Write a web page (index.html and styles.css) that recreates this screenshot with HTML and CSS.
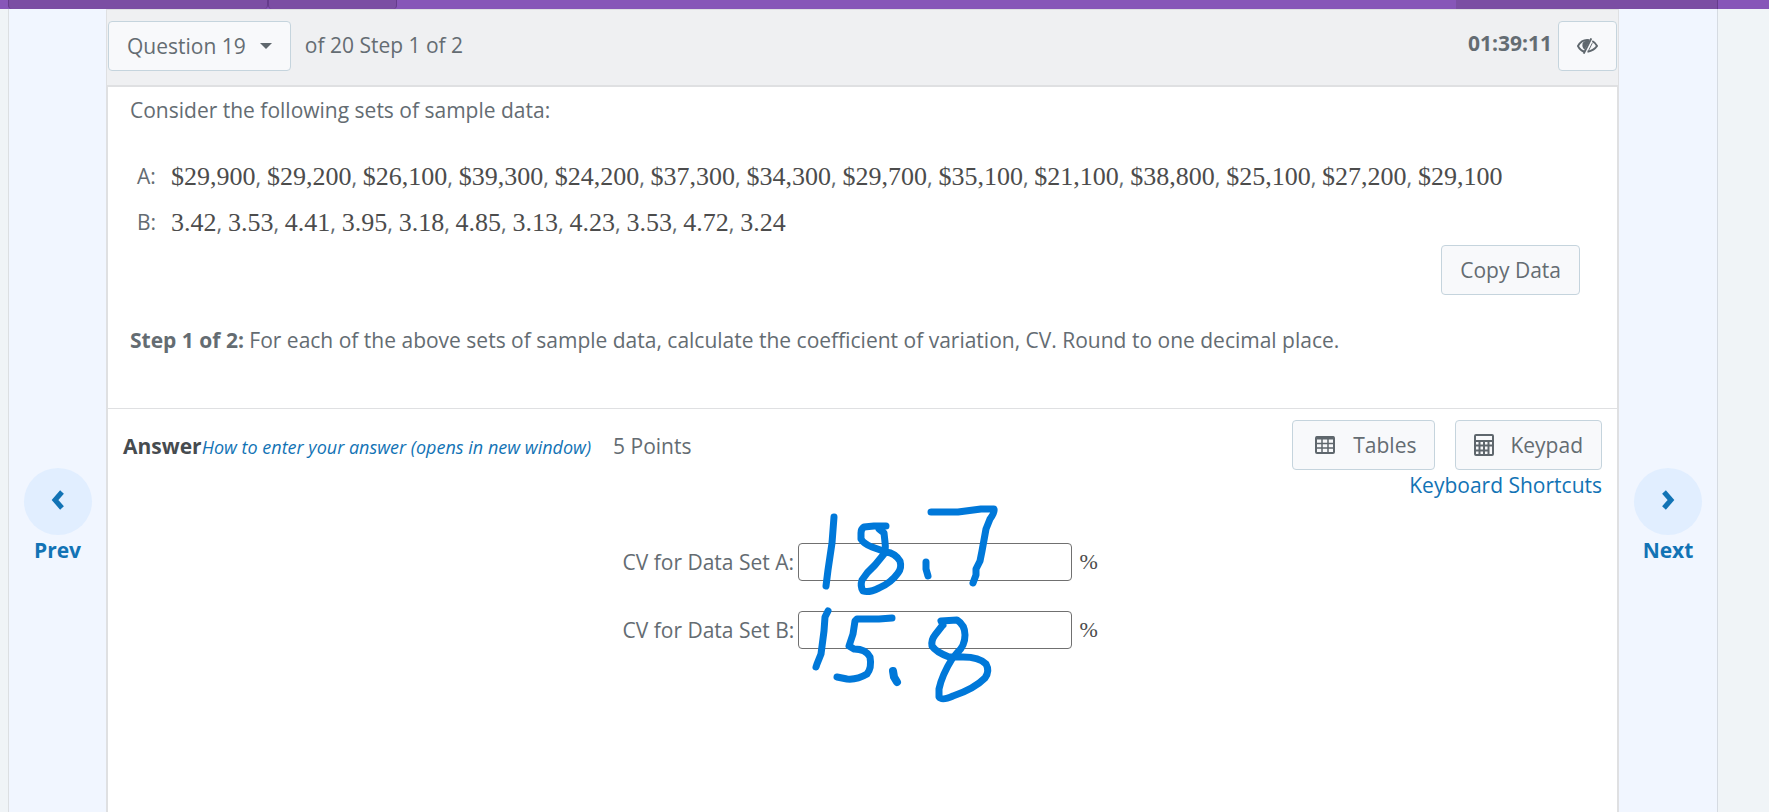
FILE: index.html
```html
<!DOCTYPE html>
<html lang="en">
<head>
    <meta charset="UTF-8">
    <meta name="viewport" content="width=device-width, initial-scale=1.0">
    <title>Question 19 of 20</title>
    <link rel="stylesheet" href="styles.css">
</head>
<body>
    <div class="top-bar">
        <div class="tab tab-wide"></div>
        <div class="tab tab-narrow"></div>
        <div class="tab-right"></div>
    </div>

    <div class="page">
        <nav class="side">
            <a class="side-link" href="#prev">
                <span class="circle">
                    <svg width="14" height="20" viewBox="0 0 14 20"><path d="M11 2 L4 10 L11 18" fill="none" stroke="#1273b5" stroke-width="5"/></svg>
                </span>
                Prev
            </a>
        </nav>

        <main class="main">
            <header class="question-bar">
                <button class="btn question-btn">Question 19 <span class="caret"></span></button>
                <span class="step-count">of 20 Step 1 of 2</span>
                <span class="timer">01:39:11</span>
                <button class="btn eye-btn" aria-label="Hide timer">
                    <svg width="22" height="18" viewBox="0 0 22 18" fill="none" stroke="#5f676d" stroke-width="2">
                        <path d="M8 15 C4 14 2 11 1 9 C4 4 8 2 13 3"/>
                        <path d="M16 4 C18 5 20 7 21 9 C19 12 16 14 11 15"/>
                        <path d="M7 17 L15 1"/>
                        <path d="M12 14 L16 6" stroke-width="1"/>
                        <path d="M6 6 C5 9 6 11 8 13 L13 4 C10 3 7 4 6 6Z" fill="#5f676d" stroke="none"/>
                    </svg>
                </button>
            </header>

            <section class="question">
                <p>Consider the following sets of sample data:</p>
                <table class="data">
                    <tr>
                        <th>A:</th>
                        <td><b>$29,900</b>, <b>$29,200</b>, <b>$26,100</b>, <b>$39,300</b>, <b>$24,200</b>, <b>$37,300</b>, <b>$34,300</b>, <b>$29,700</b>, <b>$35,100</b>, <b>$21,100</b>, <b>$38,800</b>, <b>$25,100</b>, <b>$27,200</b>, <b>$29,100</b></td>
                    </tr>
                    <tr>
                        <th>B:</th>
                        <td><b>3.42</b>, <b>3.53</b>, <b>4.41</b>, <b>3.95</b>, <b>3.18</b>, <b>4.85</b>, <b>3.13</b>, <b>4.23</b>, <b>3.53</b>, <b>4.72</b>, <b>3.24</b></td>
                    </tr>
                </table>
                <div class="copy-row">
                    <button class="btn">Copy Data</button>
                </div>
                <p class="step"><strong>Step 1 of 2:</strong> For each of the above sets of sample data, calculate the coefficient of variation, CV. Round to one decimal place.</p>
            </section>

            <section class="answer">
                <div class="answer-bar">
                    <div class="answer-title">
                        <h2>Answer</h2><a class="how-to" href="#help">How to enter your answer (opens in new window)</a>
                        <span class="points">5 Points</span>
                    </div>
                    <div class="tools">
                        <div class="tool-buttons">
                            <button class="btn tool-btn">
                                <svg width="20" height="18" viewBox="0 0 20 18" fill="none" stroke="#5f676d">
                                    <rect x="1" y="1" width="18" height="16" rx="1" stroke-width="2"/>
                                    <path d="M1 2H19" stroke-width="3"/>
                                    <path d="M1 7.500H19M1 12H19M7 3V17M13 3V17" stroke-width="1.500"/>
                                </svg>
                                Tables
                            </button>
                            <button class="btn tool-btn keypad-btn">
                                <svg width="20" height="22" viewBox="0 0 20 22" fill="none" stroke="#5f676d">
                                    <rect x="1" y="1" width="18" height="20" rx="1" stroke-width="2"/>
                                    <path d="M1 7H19M1 11.500H19M1 16.500H15M5.500 7V21M10 7V21M14.500 7V21" stroke-width="2"/>
                                </svg>
                                Keypad
                            </button>
                        </div>
                        <a class="shortcuts" href="#shortcuts">Keyboard Shortcuts</a>
                    </div>
                </div>

                <form class="cv-form">
                    <div class="cv-row">
                        <label for="cvA">CV for Data Set A:</label>
                        <input type="text" id="cvA">
                        <span class="percent">%</span>
                    </div>
                    <div class="cv-row">
                        <label for="cvB">CV for Data Set B:</label>
                        <input type="text" id="cvB">
                        <span class="percent">%</span>
                    </div>
                    <!-- pen notes over the inputs -->
                    <svg class="ink" width="220" height="220" viewBox="780 490 220 220" fill="none" stroke="#0078d9" stroke-width="7" stroke-linecap="round" stroke-linejoin="round">
                        <path d="M833 516 L831 542 L827 569 L825 585"/>
                        <path d="M885 525 L873 525 L863 526 Q860 528 860 532 L860 538 Q863 543 871 546 L885 551 Q894 552 899 560 Q901 567 897 572 Q890 582 878 587 Q868 592 862 590 Q859 585 861 579 Q866 571 874 564 L883 553 Q885 549 884 541 L883 532 L878 528"/>
                        <path d="M925 561 L925 568 L927 575"/>
                        <path d="M930 511 L957 511 L980 508 L993 508 Q994 511 989 518 L985 528 L981 550 L979 560 L975 568 L975 574 L972 582"/>
                        <path d="M827 610 L824 616 L823 630 L820 653 L816 663 L815 666"/>
                        <path d="M891 617 L878 618 L856 618 L854 620 L852 633 L848 645 L853 648 Q865 648 869 656 Q871 667 866 673 Q856 679 846 678 L836 676"/>
                        <path d="M892 670 L893 676 L896 681" stroke-width="8"/>
                        <path d="M942 624 L940 620 L956 619 Q964 624 964 634 Q964 645 956 652 L951 658 Q941 674 938 688 L938 696 Q941 700 952 695 Q973 688 984 677 Q989 670 985 663 Q978 656 962 656 L948 656 Q935 651 931 645 Q930 639 934 634 L941 625"/>
                    </svg>
                </form>
            </section>
        </main>

        <nav class="side">
            <a class="side-link" href="#next">
                <span class="circle">
                    <svg width="14" height="20" viewBox="0 0 14 20"><path d="M3 2 L10 10 L3 18" fill="none" stroke="#1273b5" stroke-width="5"/></svg>
                </span>
                Next
            </a>
        </nav>
    </div>
</body>
</html>
```
FILE: styles.css
```css
* {
    box-sizing: border-box;
}
body {
    margin: 0;
    min-height: 100vh;
    display: flex;
    flex-direction: column;
    background-color: #f0f4f7;
    color: #646c72;
    font-family: "Open Sans", sans-serif;
    font-size: 21px;
    line-height: 30px;
}
p, h2 {
    margin: 0;
}
a {
    color: #1273b5;
    text-decoration: none;
}
.top-bar {
    display: flex;
    height: 9px;
    padding: 0 51px 0 8px;
    background-color: #8756b8;
}
.tab, .tab-right {
    background-color: #7b4ea3;
    border-right: 1px solid #653b8b;
}
.tab {
    border-left: 1px solid #653b8b;
    border-radius: 0 0 4px 4px;
}
.tab-wide {
    width: 260px;
}
.tab-narrow {
    width: 129px;
}
.tab-right {
    width: 262px;
    margin-left: auto;
}
.page {
    flex: 1;
    display: grid;
    grid-template-columns: 97px 1fr 98px;
    margin: 0 51px 0 8px;
    border-left: 1px solid #dcdfe2;
    border-right: 1px solid #d6dbe2;
    background-color: #f1f6ff;
}
/* prev / next */
.side {
    display: flex;
    justify-content: center;
    padding-top: 459px;
}
.side-link {
    display: flex;
    flex-direction: column;
    align-items: center;
    font-weight: bold;
}
.circle {
    display: flex;
    align-items: center;
    justify-content: center;
    width: 68px;
    height: 67px;
    padding-bottom: 4px;
    border-radius: 50%;
    background-color: #e1eeff;
}
.main {
    display: flex;
    flex-direction: column;
    background-color: #fff;
    border: 1px solid #dfe0e2;
    border-bottom: 0;
}
.question-bar {
    display: flex;
    align-items: flex-start;
    height: 77px;
    padding: 11px 1px 0;
    background-color: #eff0f2;
    border-bottom: 2px solid #dfe0e2;
}
.btn {
    display: flex;
    align-items: center;
    justify-content: center;
    height: 50px;
    padding: 0 18px;
    border: 1px solid #c5d4dd;
    border-radius: 4px;
    background-color: #f8f9fb;
    color: #646c72;
    font: inherit;
}
.question-btn {
    gap: 14px;
}
.caret {
    border: 6px solid transparent;
    border-top-color: #5f676d;
    border-bottom: 0;
}
.step-count {
    padding: 9px 14px;
}
.timer {
    margin-left: auto;
    padding: 7px 6px;
    font-weight: bold;
}
.eye-btn {
    width: 59px;
}
.question, .answer {
    border: 0 solid #dfe0e2;
    border-width: 0 1px;
}
.question {
    height: 322px;
    padding: 8px 22px;
    border-bottom-width: 1px;
}
.data {
    margin: 28px 0 0 7px;
    border-spacing: 0;
}
.data th, .data td {
    height: 46px;
    padding: 0;
    font-weight: normal;
    white-space: nowrap;
}
.data th {
    width: 34px;
    text-align: left;
}
.data td {
    font-size: 22px;
}
.data b {
    color: #4c4c4c;
    font-family: "Liberation Serif", serif;
    font-size: 26px;
    font-weight: normal;
}
.copy-row {
    display: flex;
    justify-content: flex-end;
    padding-right: 15px;
}
.step {
    margin-top: 30px;
}
.answer {
    flex: 1;
}
.answer-bar {
    display: flex;
    justify-content: space-between;
    padding: 11px 15px 0 15px;
}
.answer-title {
    display: flex;
    align-items: baseline;
    padding-top: 11px;
}
.answer-title h2 {
    color: #464b4f;
    font-size: 21px;
}
.how-to {
    font-size: 18px;
    font-style: italic;
}
.points {
    margin-left: 22px;
}
.tools {
    text-align: right;
}
.tool-buttons {
    display: flex;
    gap: 20px;
}
.tool-btn {
    gap: 18px;
    padding-left: 22px;
}
.keypad-btn {
    gap: 16px;
    padding-left: 18px;
}
.cv-form {
    position: relative;
    display: flex;
    flex-direction: column;
    gap: 30px;
    width: 480px;
    margin: 43px auto 0;
}
.cv-row {
    display: flex;
    align-items: center;
    height: 38px;
}
.cv-row label {
    width: 175px;
    white-space: nowrap;
}
.cv-row input {
    width: 274px;
    height: 38px;
    padding: 0 8px;
    border: 1px solid #707070;
    border-radius: 4px;
    font: inherit;
}
.percent {
    margin-left: 8px;
    color: #4c4c4c;
    font-family: "Liberation Serif", serif;
    font-size: 22px;
}
.ink {
    position: absolute;
    left: 158px;
    top: -52px;
    pointer-events: none;
}
```
